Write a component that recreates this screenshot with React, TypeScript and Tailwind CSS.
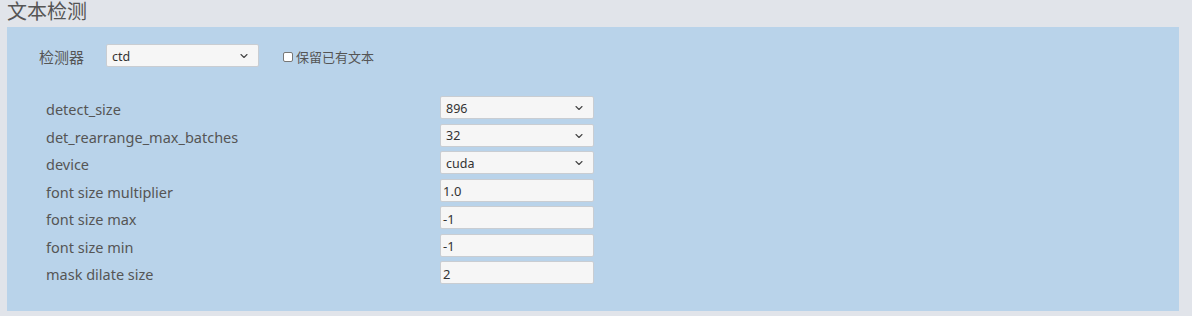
import { ChevronDown } from "lucide-react";

const font = { fontFamily: '"Noto Sans", "Noto Sans CJK SC", sans-serif' };

const selectBox =
  "relative flex h-[23px] items-center rounded-[2px] border border-[#c9cdd2] bg-[#f6f6f6] pl-[5px] pt-[2px] text-[12.5px] leading-[16px] text-[#333]";

function Select({ value, className = "" }: { value: string; className?: string }) {
  return (
    <div className={`${selectBox} ${className}`}>
      <span>{value}</span>
      <ChevronDown className="absolute right-[8px] top-[5px] h-[12px] w-[12px] text-[#444]" strokeWidth={2.2} />
    </div>
  );
}

function TextInput({ value }: { value: string }) {
  return (
    <div className="flex h-[23px] w-[154px] items-center rounded-[2px] border border-[#c9cdd2] bg-[#f6f6f6] pl-[2px] pt-[2px] text-[13px] leading-[16px] text-[#333]">
      {value}
    </div>
  );
}

const rows: { label: string; kind: "select" | "input"; value: string }[] = [
  { label: "detect_size", kind: "select", value: "896" },
  { label: "det_rearrange_max_batches", kind: "select", value: "32" },
  { label: "device", kind: "select", value: "cuda" },
  { label: "font size multiplier", kind: "input", value: "1.0" },
  { label: "font size max", kind: "input", value: "-1" },
  { label: "font size min", kind: "input", value: "-1" },
  { label: "mask dilate size", kind: "input", value: "2" },
];

export default function App() {
  return (
    <div className="h-[316px] w-[1192px] bg-[#e1e4ea]" style={font}>
      <h2 className="h-[27px] pl-[7px] text-[20px] leading-[24px] text-[#555]">文本检测</h2>
      <div className="ml-[7px] mr-[13px] h-[284px] bg-[#b9d3ea] pt-[17px]">
        <div className="flex h-[23px] items-center pl-[32px]">
          <span className="w-[67px] pt-[3px] text-[15px] leading-[20px] text-[#555]">检测器</span>
          <Select value="ctd" className="w-[153px]" />
          <label className="ml-[24px] flex items-center gap-[3px] pt-[2px] text-[13px] leading-[18px] text-[#555]">
            <span className="inline-block h-[10px] w-[10px] rounded-[2px] border border-[#777] bg-white" />
            保留已有文本
          </label>
        </div>
        <div className="mt-[29px] grid grid-cols-[394px_154px] gap-y-[4px] pl-[39px]">
          {rows.map((r) => (
            <div key={r.label} className="contents">
              <div className="flex h-[23.5px] items-center pt-[3px] text-[14.5px] leading-[18px] text-[#555]">{r.label}</div>
              <div className="flex items-center">
                {r.kind === "select" ? <Select value={r.value} className="w-[154px]" /> : <TextInput value={r.value} />}
              </div>
            </div>
          ))}
        </div>
      </div>
    </div>
  );
}
